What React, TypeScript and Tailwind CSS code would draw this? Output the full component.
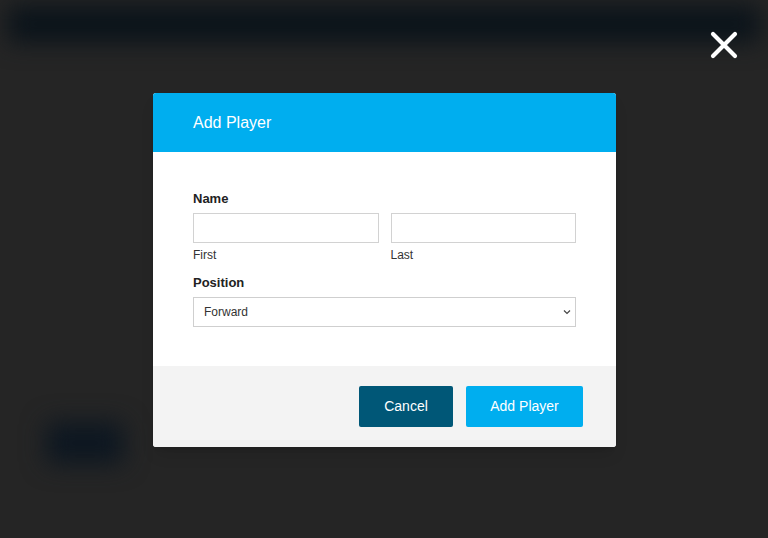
import { useState } from "react";

const font = { fontFamily: '"Liberation Sans", Arial, sans-serif' };

function Backdrop() {
  return (
    <div className="pointer-events-none absolute inset-0 overflow-hidden bg-[#252525]">
      <div className="absolute left-[8px] right-[8px] top-[6px] h-[36px] bg-[#0a131a] blur-md" />
      <div className="absolute left-[46px] top-[422px] h-[42px] w-[78px] rounded-md bg-[#0d1721] blur-md" />
    </div>
  );
}

export default function App() {
  const [first, setFirst] = useState("");
  const [last, setLast] = useState("");
  const [position, setPosition] = useState("Forward");

  return (
    <div className="relative h-[538px] w-[768px] overflow-hidden" style={font}>
      <Backdrop />

      <button
        type="button"
        aria-label="Close"
        className="absolute right-[29px] top-[30px] flex h-[30px] w-[30px] items-center justify-center"
      >
        <svg width="28" height="28" viewBox="0 0 28 28" fill="none">
          <path d="M3 3L25 25M25 3L3 25" stroke="#ffffff" strokeWidth="4.2" strokeLinecap="round" />
        </svg>
      </button>

      <div className="relative flex h-full items-start justify-center pt-[93px] pl-[1px]">
        <div className="flex w-[463px] flex-col overflow-hidden rounded-[3px] bg-white shadow-lg">
          <div className="flex h-[59px] items-center bg-[#00aeef] px-[40px]">
            <h2 className="text-[16px] text-white">Add Player</h2>
          </div>

          <div className="flex h-[214px] flex-col px-[40px] pt-[37px]">
            <label className="text-[13px] font-bold text-[#222]">Name</label>
            <div className="mt-[4px] grid grid-cols-2 gap-[12px]">
              <div className="flex flex-col">
                <input
                  value={first}
                  onChange={(e) => setFirst(e.target.value)}
                  className="h-[30px] w-full border border-[#d2d2d2] bg-white px-[10px] text-[13px] outline-none"
                />
                <span className="mt-[3px] text-[12px] text-[#333]">First</span>
              </div>
              <div className="flex flex-col">
                <input
                  value={last}
                  onChange={(e) => setLast(e.target.value)}
                  className="h-[30px] w-full border border-[#d2d2d2] bg-white px-[10px] text-[13px] outline-none"
                />
                <span className="mt-[3px] text-[12px] text-[#333]">Last</span>
              </div>
            </div>

            <label className="mt-[9px] text-[13px] font-bold text-[#222]">Position</label>
            <div className="relative mt-[5px]">
              <select
                value={position}
                onChange={(e) => setPosition(e.target.value)}
                className="h-[30px] w-full appearance-none border border-[#cfcfcf] bg-white pl-[10px] pr-[24px] text-[12px] text-[#333] outline-none"
              >
                <option>Forward</option>
                <option>Midfielder</option>
                <option>Defender</option>
                <option>Goalkeeper</option>
              </select>
              <svg
                className="pointer-events-none absolute right-[5px] top-1/2 -translate-y-1/2"
                width="8"
                height="6"
                viewBox="0 0 8 6"
                fill="none"
              >
                <path d="M1 1.5L4 4.5L7 1.5" stroke="#444" strokeWidth="1.2" />
              </svg>
            </div>
          </div>

          <div className="flex h-[81px] items-center justify-end gap-[13px] bg-[#f3f3f3] pr-[33px]">
            <button
              type="button"
              className="h-[41px] w-[94px] rounded-[2px] bg-[#005777] text-[14px] text-white"
            >
              Cancel
            </button>
            <button
              type="button"
              className="h-[41px] w-[117px] rounded-[2px] bg-[#00aeef] text-[14px] text-white"
            >
              Add Player
            </button>
          </div>
        </div>
      </div>
    </div>
  );
}
